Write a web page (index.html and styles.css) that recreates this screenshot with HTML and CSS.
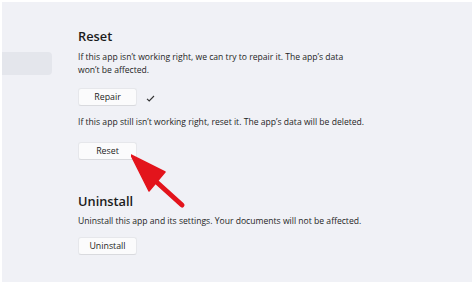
FILE: index.html
```html
<!DOCTYPE html>
<html lang="en">
<head>
    <meta charset="UTF-8">
    <title>Apps - Advanced options</title>
    <link rel="stylesheet" href="styles.css">
</head>
<body>
    <div class="frame">
        <!-- Left navigation strip -->
        <div class="sidebar">
            <div class="nav-item"></div>
        </div>

        <div class="content">
            <!-- Reset section -->
            <h2 class="section-title">Reset</h2>
            <p class="desc">If this app isn’t working right, we can try to repair it. The app’s data<br>won’t be affected.</p>
            <div class="btn-row repair-row">
                <button class="btn">Repair</button>
                <svg class="check" width="9" height="7" viewBox="0 0 9 7">
                    <path d="M1 3.8 L3.2 6 L8 1" fill="none" stroke="#333" stroke-width="1.1"/>
                </svg>
            </div>
            <p class="desc still">If this app still isn’t working right, reset it. The app’s data will be deleted.</p>
            <div class="btn-row reset-row">
                <button class="btn">Reset</button>
            </div>

            <!-- Uninstall section -->
            <h2 class="section-title uninstall-title">Uninstall</h2>
            <p class="desc uninstall-desc">Uninstall this app and its settings. Your documents will not be affected.</p>
            <div class="btn-row uninstall-row">
                <button class="btn">Uninstall</button>
            </div>
        </div>

        <!-- Red callout arrow pointing at Reset -->
        <svg class="arrow" width="70" height="70" viewBox="0 0 70 70">
            <line x1="20" y1="24" x2="51" y2="52" stroke="#e3141c" stroke-width="5" stroke-linecap="round"/>
            <polygon points="0,2 34,19 18,38" fill="#e3141c" stroke="#e3141c" stroke-width="1.5" stroke-linejoin="round"/>
        </svg>
    </div>
</body>
</html>
```

FILE: styles.css
```css
body {
    margin: 0;
    padding: 0;
    background: #ffffff;
    font-family: "Open Sans", "Noto Sans", sans-serif;
    color: #262626;
}

.frame {
    position: relative;
    display: flex;
    margin: 2px 2px 3px 2px;
    height: 280px;
    background: #f0f1f6;
    overflow: hidden;
}

/* Sidebar */
.sidebar {
    width: 76px;
    flex-shrink: 0;
    padding-top: 50px;
}

.nav-item {
    width: 50px;
    height: 23px;
    background: #e4e6ec;
    border-radius: 0 4px 4px 0;
}

/* Main column */
.content {
    padding-top: 24px;
}

.section-title {
    margin: 0;
    font-size: 12.8px;
    font-weight: 600;
    line-height: 20px;
    color: #1b1b1b;
}

.desc {
    margin: 5px 0 0;
    font-size: 8.6px;
    line-height: 12.5px;
    color: #1f1f1f;
}

.btn-row {
    display: flex;
    align-items: center;
}

.repair-row {
    margin-top: 12px;
}

.reset-row {
    margin-top: 13px;
}

.uninstall-row {
    margin-top: 10px;
}

.btn {
    width: 59px;
    height: 18px;
    padding: 0;
    font-family: inherit;
    font-size: 8.8px;
    color: #1d1d1d;
    background: #fbfbfc;
    border: 1px solid #e6e7eb;
    border-bottom-color: #d9dade;
    border-radius: 3px;
}

.check {
    margin-left: 9px;
    margin-top: 3px;
}

.still {
    margin-top: 10px;
}

.uninstall-title {
    margin-top: 31px;
}

.uninstall-desc {
    margin-top: 4px;
}

/* Callout arrow */
.arrow {
    position: absolute;
    left: 129px;
    top: 151px;
}
```
